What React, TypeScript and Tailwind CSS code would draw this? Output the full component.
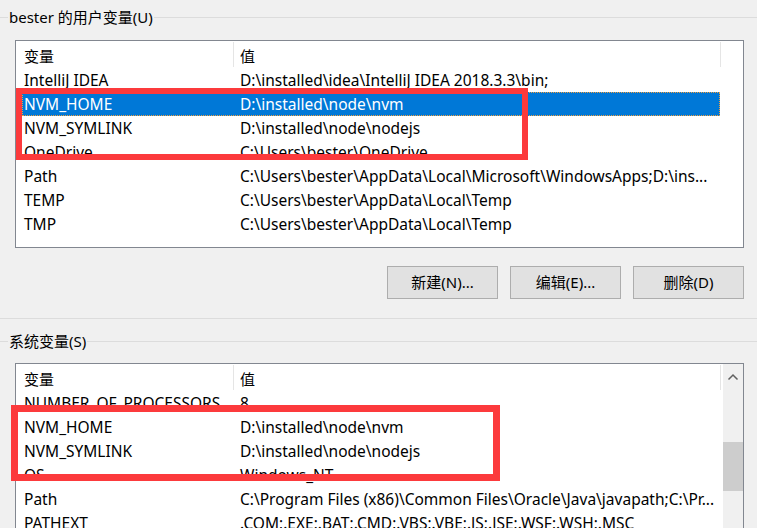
import React from "react";

type Row = { name: string; value: string; selected?: boolean };

const userVars: Row[] = [
  { name: "IntelliJ IDEA", value: "D:\\installed\\idea\\IntelliJ IDEA 2018.3.3\\bin;" },
  { name: "NVM_HOME", value: "D:\\installed\\node\\nvm", selected: true },
  { name: "NVM_SYMLINK", value: "D:\\installed\\node\\nodejs" },
  { name: "OneDrive", value: "C:\\Users\\bester\\OneDrive" },
  { name: "Path", value: "C:\\Users\\bester\\AppData\\Local\\Microsoft\\WindowsApps;D:\\ins..." },
  { name: "TEMP", value: "C:\\Users\\bester\\AppData\\Local\\Temp" },
  { name: "TMP", value: "C:\\Users\\bester\\AppData\\Local\\Temp" },
];

const sysVars: Row[] = [
  { name: "NUMBER_OF_PROCESSORS", value: "8" },
  { name: "NVM_HOME", value: "D:\\installed\\node\\nvm" },
  { name: "NVM_SYMLINK", value: "D:\\installed\\node\\nodejs" },
  { name: "OS", value: "Windows_NT" },
  { name: "Path", value: "C:\\Program Files (x86)\\Common Files\\Oracle\\Java\\javapath;C:\\Pr..." },
  { name: "PATHEXT", value: ".COM;.EXE;.BAT;.CMD;.VBS;.VBE;.JS;.JSE;.WSF;.WSH;.MSC" },
];

const font = { fontFamily: '"Noto Sans", "Noto Sans CJK SC", sans-serif' };

function GroupLabel({ text }: { text: string }) {
  return (
    <div className="flex items-center h-[34px]">
      <div className="w-[8px] h-px bg-[#dcdcdc]" />
      <span className="px-[1px] text-[15px] text-black whitespace-nowrap">{text}</span>
      <div className="flex-1 h-px bg-[#dcdcdc]" />
    </div>
  );
}

function VarRow({ row }: { row: Row }) {
  return (
    <div
      className={
        "ml-[6px] w-[698px] h-[24px] flex items-center pt-[1px] text-[15.5px] whitespace-nowrap " +
        (row.selected
          ? "bg-[#0078d7] text-white outline-1 outline-dotted outline-[#f0a040] -outline-offset-1"
          : "text-black")
      }
    >
      <div className="w-[211px] pl-[2px] overflow-hidden">{row.name}</div>
      <div className="flex-1 pl-[7px] overflow-hidden">{row.value}</div>
    </div>
  );
}

function Header() {
  return (
    <div className="relative h-[27px] flex items-center text-[15px] text-black">
      <div className="ml-[6px] w-[211px] pl-[2px] pt-[3px]">变量</div>
      <div className="w-px h-[25px] bg-[#e5e5e5]" />
      <div className="pl-[6px] w-[486px] pt-[3px]">值</div>
      <div className="w-px h-[25px] bg-[#e5e5e5]" />
    </div>
  );
}

export default function App() {
  return (
    <div className="w-[757px] h-[528px] overflow-hidden bg-[#f0f0f0]" style={font}>
      <GroupLabel text="bester 的用户变量(U)" />
      <div className="relative ml-[15px] mt-[6px] w-[729px] h-[208px] border border-[#828790] bg-white">
        <Header />
        {userVars.map((r) => (
          <VarRow key={r.name} row={r} />
        ))}
        <div className="absolute left-[0px] top-[47px] w-[512px] h-[72px] border-[6px] border-[#fc3a3c]" />
      </div>

      <div className="flex justify-end gap-[12px] pr-[13px] mt-[18px]">
        {["新建(N)...", "编辑(E)...", "删除(D)"].map((t) => (
          <button
            key={t}
            className="w-[111px] h-[33px] border border-[#adadad] bg-[#e1e1e1] text-[15px] text-black"
          >
            {t}
          </button>
        ))}
      </div>

      <div className="mt-[19px] h-px bg-[#dcdcdc]" />
      <div className="mt-[5px]">
        <GroupLabel text="系统变量(S)" />
      </div>
      <div className="relative ml-[15px] mt-[5px] w-[729px] h-[200px] border border-[#828790] bg-white flex">
        <div className="flex-1">
          <Header />
          {sysVars.map((r) => (
            <VarRow key={r.name} row={r} />
          ))}
        </div>
        <div className="w-[20px] bg-[#f0f0f0] flex flex-col items-center">
          <svg width="12" height="8" viewBox="0 0 12 8" className="mt-[9px]">
            <path d="M1.5 6.5 L6 2 L10.5 6.5" stroke="#606060" strokeWidth="1.5" fill="none" />
          </svg>
          <div className="mt-[61px] w-full h-[49px] bg-[#cdcdcd]" />
        </div>
        <div className="absolute -left-[5px] top-[41px] w-[489px] h-[76px] border-[7px] border-[#fc3a3c]" />
      </div>
    </div>
  );
}
